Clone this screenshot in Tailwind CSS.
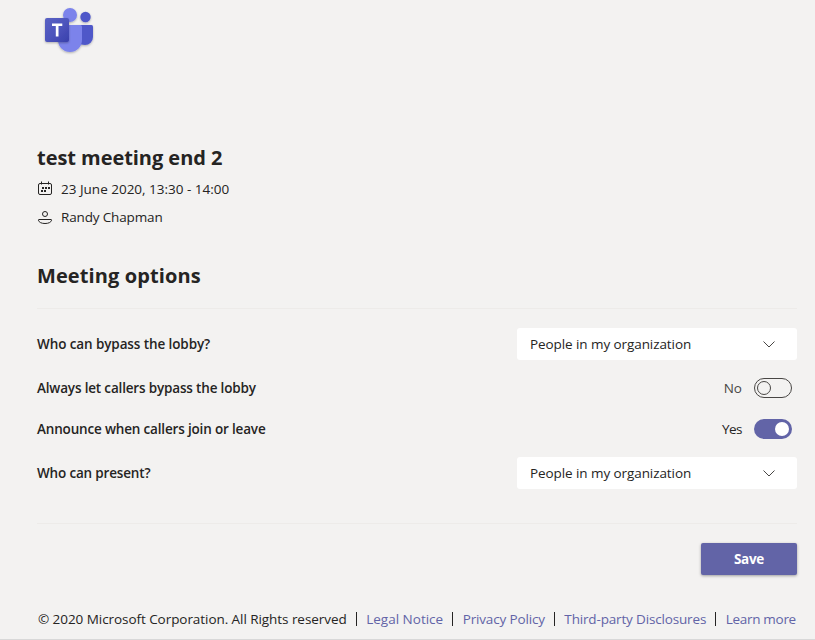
<!DOCTYPE html>
<html lang="en">
<head>
    <meta charset="UTF-8">
    <meta name="viewport" content="width=device-width, initial-scale=1.0">
    <title>Meeting options</title>
    <script src="https://cdn.jsdelivr.net/npm/@tailwindcss/browser@4"></script>
</head>
<body class="bg-[#f3f2f1] text-[#252423] font-['Open_Sans','Noto_Sans',sans-serif] text-[13.5px] leading-5">
    <div class="flex flex-col w-[815px] h-[640px] pl-[37px] pr-[18px] border-b border-[#d8d8d8] overflow-hidden whitespace-nowrap">
        <header class="h-36 shrink-0 pl-[5px] pt-1">
            <!-- Teams logo -->
            <svg class="w-[56px] h-[52px]" viewBox="0 0 56 52" fill="none">
                <defs>
                    <linearGradient id="tile" x1="3" y1="14" x2="27" y2="38" gradientUnits="userSpaceOnUse">
                        <stop stop-color="#5a62c3"/>
                        <stop offset=".5" stop-color="#4d55bd"/>
                        <stop offset="1" stop-color="#3940ab"/>
                    </linearGradient>
                    <filter id="soft" x="-20%" y="-20%" width="140%" height="150%">
                        <feDropShadow dx="0" dy="1" stdDeviation="1.2" flood-color="#000" flood-opacity=".28"/>
                    </filter>
                </defs>
                <g filter="url(#soft)">
                    <circle cx="43.5" cy="13" r="5.2" fill="#5059c9"/>
                    <path d="M38 21h11.500a1.500 1.500 0 0 1 1.500 1.500V33a8 8 0 0 1-8 8c-3 0-5-1-6-2z" fill="#5059c9"/>
                    <circle cx="28" cy="11" r="7" fill="#7b83eb"/>
                    <path d="M17 21h21.500a1.500 1.500 0 0 1 1.500 1.500V36a12 12 0 0 1-24 0V21z" fill="#7b83eb"/>
                </g>
                <rect x="3" y="14" width="24" height="24" rx="2" fill="url(#tile)" filter="url(#soft)"/>
                <path d="M10 19.500h10.300V22h-3.800v10.500h-2.700V22H10z" fill="#fff"/>
            </svg>
        </header>

        <section class="shrink-0">
            <h1 class="h-7 text-xl leading-7 font-bold tracking-[-0.05px]">test meeting end 2</h1>
            <div class="flex items-center h-7 mt-[3px]">
                <svg class="w-4 h-4 mr-2" viewBox="0 0 16 16" fill="none" stroke="#252423">
                    <rect x="1.500" y="2.500" width="13" height="11" rx="1.500"/>
                    <path d="M4.500 0.500v3M11.500 0.500v3"/>
                    <path d="M5 7h2M8 7h2M11 7h2M4 10h2M7 10h2" stroke-width="2"/>
                </svg>
                <span>23 June 2020, 13:30 - 14:00</span>
            </div>
            <div class="flex items-center h-7">
                <svg class="w-4 h-4 mr-2" viewBox="0 0 16 16" fill="none" stroke="#252423">
                    <circle cx="8" cy="5" r="2.500"/>
                    <path d="M2 10.500h12c.4 0 .7.300.6.700C14 13.400 11.500 14.500 8 14.500S2 13.400 1.400 11.200c-.1-.4.200-.7.600-.7z"/>
                </svg>
                <span class="tracking-[-0.15px]">Randy Chapman</span>
            </div>
        </section>

        <h2 class="h-7 mt-[31px] shrink-0 text-xl leading-7 font-bold tracking-[0.1px]">Meeting options</h2>

        <section class="mt-[18px] shrink-0 border-y border-[#edebe9] h-[216px] pt-[19px] font-semibold tracking-[-0.17px]">
            <div class="flex items-center justify-between h-8">
                <span class="tracking-[-0.1px]">Who can bypass the lobby?</span>
                <button class="flex items-center justify-between w-[280px] h-8 pl-[13px] pr-[21px] rounded-[3px] bg-white font-normal tracking-[-0.08px]">
                    <span>People in my organization</span>
                    <svg class="w-[14px] h-[14px]" viewBox="0 0 14 14" fill="none" stroke="#484644"><path d="M1.500 4.500l5.500 5.500 5.500-5.500"/></svg>
                </button>
            </div>
            <div class="flex items-center justify-between h-5 mt-[18px] pr-[5px]">
                <span>Always let callers bypass the lobby</span>
                <div class="flex items-center gap-3 font-normal text-[#484644] tracking-normal">
                    <span>No</span>
                    <span class="flex items-center w-[38px] h-5 pl-0.5 rounded-full border border-[#484644]">
                        <span class="w-[14px] h-[14px] rounded-full border border-[#484644]"></span>
                    </span>
                </div>
            </div>
            <div class="flex items-center justify-between h-5 mt-[21px] pr-[5px]">
                <span>Announce when callers join or leave</span>
                <div class="flex items-center gap-3 font-normal tracking-[-0.5px]">
                    <span>Yes</span>
                    <span class="flex items-center justify-end w-[38px] h-5 pr-[3px] rounded-full bg-[#6264a7]">
                        <span class="w-[14px] h-[14px] rounded-full bg-white"></span>
                    </span>
                </div>
            </div>
            <div class="flex items-center justify-between h-8 mt-[18px]">
                <span>Who can present?</span>
                <button class="flex items-center justify-between w-[280px] h-8 pl-[13px] pr-[21px] rounded-[3px] bg-white font-normal tracking-[-0.08px]">
                    <span>People in my organization</span>
                    <svg class="w-[14px] h-[14px]" viewBox="0 0 14 14" fill="none" stroke="#484644"><path d="M1.500 4.500l5.500 5.500 5.500-5.500"/></svg>
                </button>
            </div>
        </section>

        <div class="flex justify-end mt-[19px] shrink-0">
            <button class="w-24 h-8 rounded-xs bg-[#6264a7] text-white font-bold tracking-[-0.3px] shadow-[0_1px_3px_rgba(0,0,0,0.35)]">Save</button>
        </div>

        <footer class="flex items-center justify-between mt-[34px] h-5 shrink-0 pl-px pr-px text-[#6264a7] tracking-[-0.16px]">
            <span class="text-[#252423] tracking-[-0.06px]">© 2020 Microsoft Corporation. All Rights reserved</span>
            <span class="w-px h-[14px] bg-[#252423]"></span>
            <a href="#" class="tracking-normal">Legal Notice</a>
            <span class="w-px h-[14px] bg-[#252423]"></span>
            <a href="#">Privacy Policy</a>
            <span class="w-px h-[14px] bg-[#252423]"></span>
            <a href="#">Third-party Disclosures</a>
            <span class="w-px h-[14px] bg-[#252423]"></span>
            <a href="#" class="tracking-[-0.3px]">Learn more</a>
        </footer>
    </div>
</body>
</html>
